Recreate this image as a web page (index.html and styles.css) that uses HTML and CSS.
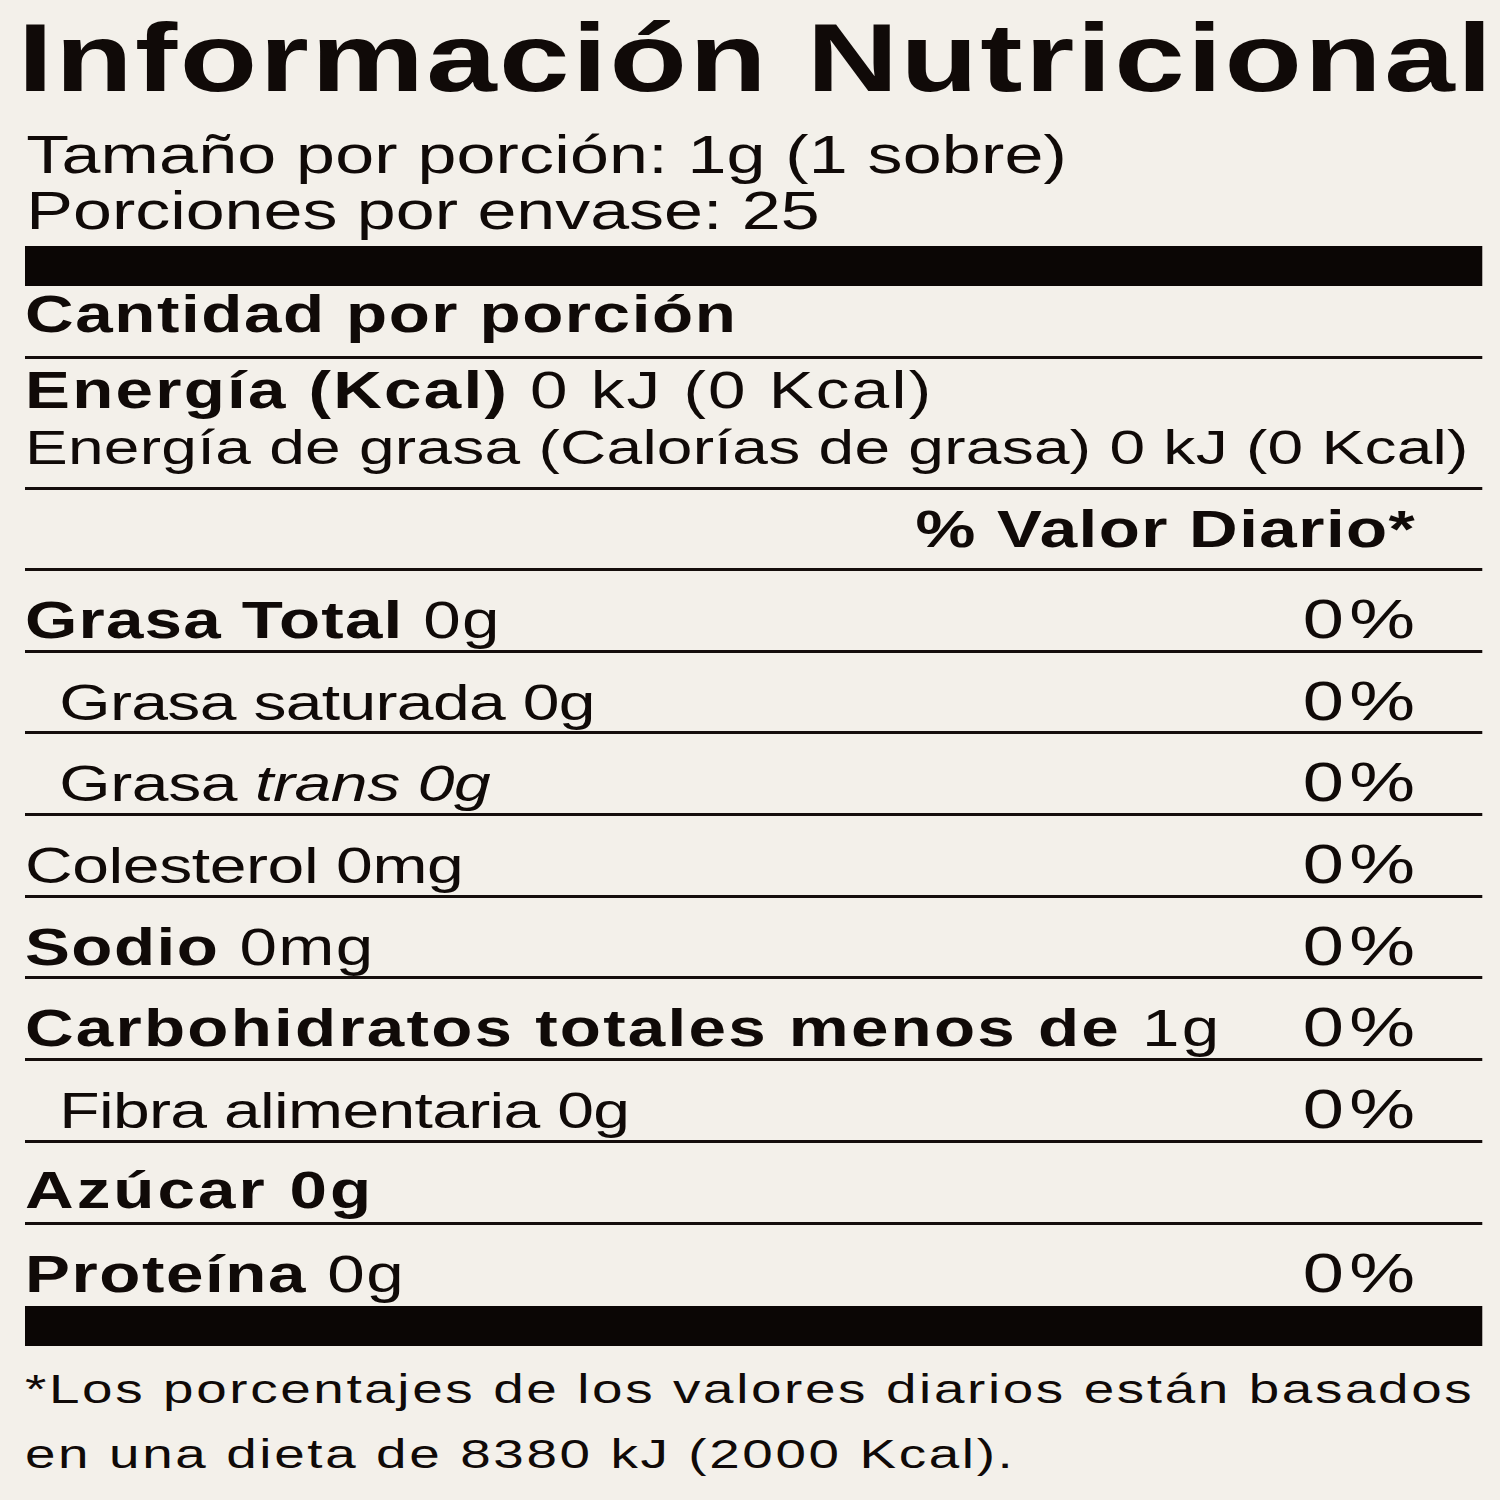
FILE: index.html
```html
<!DOCTYPE html>
<html lang="es">
<head>
<meta charset="utf-8">
<title>Información Nutricional</title>
<link rel="stylesheet" href="styles.css">
</head>
<body>
<div class="label">
  <h1 class="title">Información Nutricional</h1>
  <div class="serving">
    <p class="serving-line ls-size">Tamaño por porción: 1g (1 sobre)</p>
    <p class="serving-line">Porciones por envase: 25</p>
  </div>
  <div class="bar"></div>
  <div class="amount">Cantidad por porción</div>
  <div class="energy">
    <p class="energy-main"><b>Energía (Kcal)</b> 0 kJ (0 Kcal)</p>
    <p class="energy-fat">Energía de grasa (Calorías de grasa) 0 kJ (0 Kcal)</p>
  </div>
  <div class="dv-head">% Valor Diario*</div>

  <div class="row">
    <span class="name ls-fat"><b>Grasa Total</b> 0g</span>
    <span class="pct">0%</span>
  </div>
  <div class="row">
    <span class="name sub ls-sat">Grasa saturada 0g</span>
    <span class="pct">0%</span>
  </div>
  <div class="row">
    <span class="name sub ls-trans">Grasa <i>trans 0g</i></span>
    <span class="pct">0%</span>
  </div>
  <div class="row">
    <span class="name reg ls-chol">Colesterol 0mg</span>
    <span class="pct">0%</span>
  </div>
  <div class="row">
    <span class="name ls-sod"><b>Sodio</b> 0mg</span>
    <span class="pct">0%</span>
  </div>
  <div class="row">
    <span class="name ls-carb"><b>Carbohidratos totales menos de</b> 1g</span>
    <span class="pct">0%</span>
  </div>
  <div class="row">
    <span class="name sub ls-fib">Fibra alimentaria 0g</span>
    <span class="pct">0%</span>
  </div>
  <div class="row">
    <span class="name ls-sug"><b>Azúcar 0g</b></span>
  </div>
  <div class="row row-last">
    <span class="name ls-prot"><b>Proteína</b> 0g</span>
    <span class="pct">0%</span>
  </div>

  <div class="bar"></div>
  <p class="footnote">*Los porcentajes de los valores diarios están basados<br>en una dieta de 8380 kJ (2000 Kcal).</p>
</div>
</body>
</html>
```

FILE: styles.css
```css
html, body {
  margin: 0;
  padding: 0;
  background: #f3f0ea;
}

body {
  font-family: "Liberation Sans", Arial, sans-serif;
  color: #100a08;
  overflow: hidden;
}

.label {
  width: 1104px;
  margin-left: 25px;
  padding-top: 8px;
  transform-origin: 0 0;
  transform: scaleX(1.32);
  white-space: nowrap;
}

p { margin: 0; }

.title {
  margin: 0 0 0 -5.5px;
  font-size: 96px;
  line-height: 100px;
  font-weight: 700;
  letter-spacing: 1.8px;
}

.serving {
  padding-top: 19px;
  font-size: 53px;
  line-height: 56px;
  padding-left: 1px;
}

.ls-size { letter-spacing: 0.15px; }

.bar {
  height: 40px;
  background: #0b0605;
}

.serving + .bar { margin-top: 7px; }

.amount {
  font-size: 51px;
  font-weight: 700;
  line-height: 58px;
  letter-spacing: 1.2px;
  padding-bottom: 12px;
  border-bottom: 3px solid #150e0c;
}

.energy {
  padding-top: 3px;
  padding-bottom: 11px;
  border-bottom: 3px solid #150e0c;
  line-height: 57px;
}

.energy-main {
  font-size: 51px;
  letter-spacing: 1.7px;
}

.energy-main b { font-weight: 700; }

.energy-fat {
  font-size: 48.5px;
  letter-spacing: 0.2px;
}

.dv-head {
  padding: 11px 50px 9px 0;
  text-align: right;
  font-size: 51px;
  line-height: 58px;
  font-weight: 700;
  letter-spacing: 1.1px;
  border-bottom: 3px solid #150e0c;
}

.row {
  display: flex;
  justify-content: space-between;
  align-items: baseline;
  height: 54px;
  padding: 21px 51px 3.7px 0;
  line-height: 54px;
  border-bottom: 3px solid #150e0c;
}

.row-last {
  border-bottom: 0;
  padding-bottom: 6.7px;
}

.name {
  font-size: 51px;
}

.name b { font-weight: 700; }

.name.sub {
  font-size: 50px;
  padding-left: 26px;
}

.name.reg { font-size: 50px; }

.ls-fat { letter-spacing: 0.9px; }
.ls-sat { letter-spacing: -0.5px; }
.ls-trans { letter-spacing: -0.3px; }
.ls-chol { letter-spacing: -0.3px; }
.ls-sod { letter-spacing: 1.1px; }
.ls-carb { letter-spacing: 1.7px; }
.ls-fib { letter-spacing: -0.5px; }
.ls-sug { letter-spacing: 2.3px; }
.ls-prot { letter-spacing: 1.2px; }

.pct {
  font-size: 56px;
  letter-spacing: 4px;
  margin-right: -4px;
}

.footnote {
  margin-top: 10px;
  font-size: 41.5px;
  line-height: 65px;
  letter-spacing: 2px;
}
```
